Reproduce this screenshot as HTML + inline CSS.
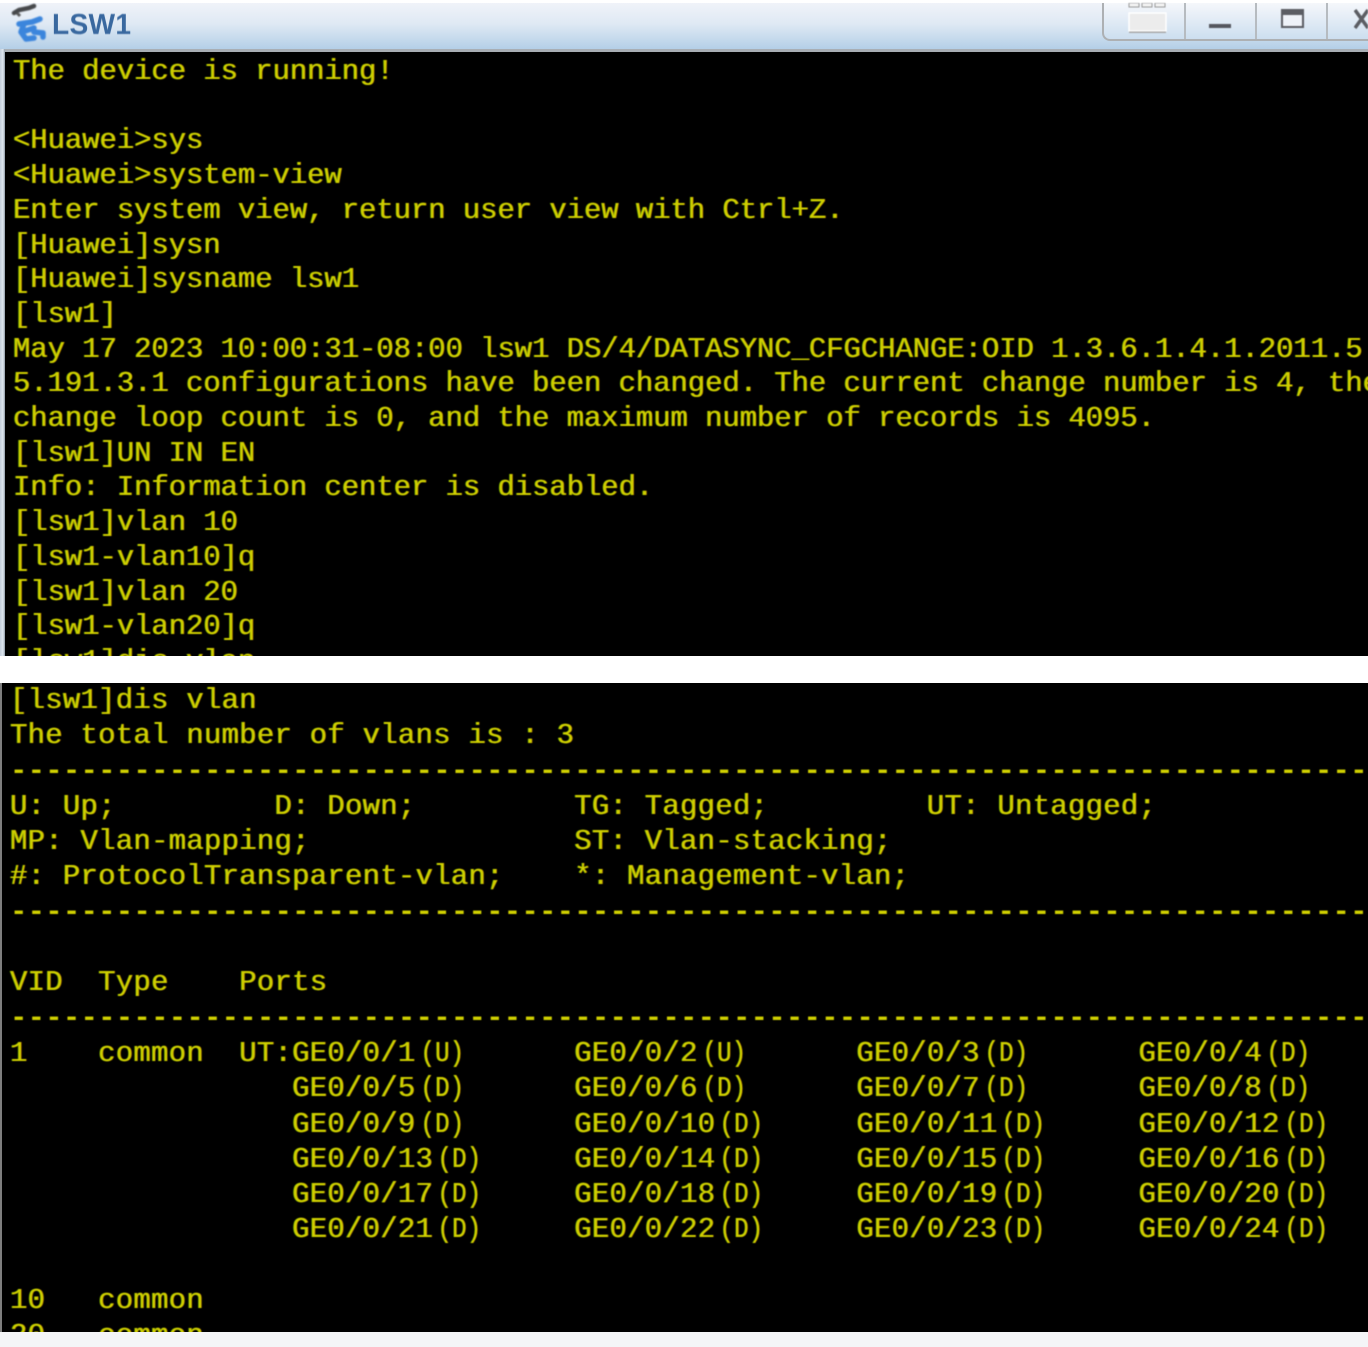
<!DOCTYPE html>
<html><head><meta charset="utf-8">
<style>
html,body{margin:0;padding:0;background:#fff;width:1368px;height:1347px;overflow:hidden}
#root{position:relative;width:1368px;height:1347px;overflow:hidden;background:#fff}
.bar{position:absolute;left:0;top:3px;width:1368px;height:46px;background:linear-gradient(#f0f3f9,#dfe9f4 45%,#b4cfe7)}
.title{position:absolute;left:52px;top:7px;font:bold 29px/36px "Liberation Sans",sans-serif;color:#39689f;letter-spacing:.3px;transform:scaleX(.97);transform-origin:0 0;filter:blur(.4px)}
.term{position:absolute;background:#000;overflow:hidden}
pre{position:absolute;margin:0;font-family:"Liberation Mono","Courier New",monospace;color:#cfcf00;filter:blur(.4px);text-shadow:-.6px 0 0 #4a9000,.6px 0 0 #a06000}
pre b{font-weight:bold;text-shadow:none;color:#d0d000}
pre i{font-style:normal;display:inline-block;transform:scaleX(.83);transform-origin:50% 50%}
#t1{left:0;top:49px;width:1368px;height:607px;background:#000}
#t1 pre{left:13px;top:6px;font-size:29px;letter-spacing:-.1px;line-height:34.7px}
#t2{left:0;top:683px;width:1368px;height:649px}
#t2 pre{left:10px;top:0;font-size:29px;letter-spacing:.23px;line-height:35.3px}
.edge{position:absolute;left:0;width:5px;top:49px;height:607px;background:linear-gradient(90deg,#c3cedb,#dfe7ef 60%,#8c98a4)}
.edge2{position:absolute;left:0;width:2px;top:683px;height:649px;background:#7e7e7e}
.foot{position:absolute;left:0;top:1332px;width:1368px;height:15px;background:#f4f5f7}
.tabs{position:absolute;left:1102px;top:3px;width:266px;height:38px;border:solid #adb0b3;border-width:0 0 2px 2px;border-bottom-left-radius:8px;background:linear-gradient(#f5f7fb,#ccdeef);box-sizing:border-box;filter:blur(.3px)}
.sep{position:absolute;top:3px;width:1.5px;height:36px;background:#b6bbc0}
.topline{position:absolute;left:5px;top:49px;width:1363px;height:3px;background:#a8aeb4;z-index:3}
</style></head>
<body><div id="root">
<div class="bar"></div>
<svg style="position:absolute;left:10px;top:2px;filter:blur(.7px)" width="36" height="40" viewBox="0 0 36 40">
<path d="M4 11 L9 8 L19 6 L24 4" stroke="#45474a" stroke-width="4.5" fill="none" stroke-linecap="round"/>
<path d="M7 11 l3 3" stroke="#555" stroke-width="3" fill="none"/>
<path d="M9 22 L22 20 L30 17 M14 22 L11 30 L16 37 L24 36 M24 30 L33 31 L33 35 M12 30 L24 26" stroke="#3b85dc" stroke-width="5.5" fill="none" stroke-linecap="round" stroke-linejoin="round"/>
</svg>
<div class="title">LSW1</div>
<div class="tabs"></div>
<div class="sep" style="left:1184px"></div>
<div class="sep" style="left:1255px"></div>
<div class="sep" style="left:1326px"></div>
<svg style="position:absolute;left:1128px;top:3px;filter:blur(.4px)" width="44" height="30" viewBox="0 0 44 30">
<rect x="1" y="0" width="10" height="4" fill="#f4f4f4" stroke="#9a9a9a"/><rect x="14" y="0" width="10" height="4" fill="#f4f4f4" stroke="#9a9a9a"/><rect x="27" y="0" width="10" height="4" fill="#f4f4f4" stroke="#9a9a9a"/>
<rect x="1" y="10" width="37" height="18" fill="#ececec" stroke="#fff" stroke-width="1.5"/>
<rect x="1" y="28.5" width="37" height="1.5" fill="#a6a6a6"/>
</svg>
<div style="position:absolute;left:1209px;top:24px;width:22px;height:4px;background:#55575e;filter:blur(.4px)"></div>
<div style="position:absolute;left:1281px;top:9px;width:23px;height:19px;box-sizing:border-box;border:2.5px solid #5b5d63;border-top-width:6px;background:#eef2f8;filter:blur(.4px)"></div>
<svg style="position:absolute;left:1354px;top:9px;filter:blur(.4px)" width="14" height="20" viewBox="0 0 14 20"><path d="M1 1 L14 19 M14 1 L1 19" stroke="#5b5d63" stroke-width="3.5" fill="none"/></svg>

<div class="term" id="t1"><pre>The device is running!

&lt;Huawei&gt;sys
&lt;Huawei&gt;system-view
Enter system view, return user view with Ctrl+Z.
[Huawei]sysn
[Huawei]sysname lsw1
[lsw1]
May 17 2023 10:00:31-08:00 lsw1 DS/4/DATASYNC_CFGCHANGE:OID 1.3.6.1.4.1.2011.5
5.191.3.1 configurations have been changed. The current change number is 4, the
change loop count is 0, and the maximum number of records is 4095.
[lsw1]UN IN EN
Info: Information center is disabled.
[lsw1]vlan 10
[lsw1-vlan10]q
[lsw1]vlan 20
[lsw1-vlan20]q
[lsw1]dis vlan</pre></div>
<div class="edge"></div>
<div class="topline"></div>

<div class="term" id="t2"><pre>[lsw1]dis vlan
The total number of vlans is : 3
<b>--------------------------------------------------------------------------------</b>
U: Up;         D: Down;         TG: Tagged;         UT: Untagged;
MP: Vlan-mapping;               ST: Vlan-stacking;
#: ProtocolTransparent-vlan;    *: Management-vlan;
<b>--------------------------------------------------------------------------------</b>

VID  Type    Ports
<b>--------------------------------------------------------------------------------</b>
1    common  UT:GE0/0/1<i>(U)</i>      GE0/0/2<i>(U)</i>      GE0/0/3<i>(D)</i>      GE0/0/4<i>(D)</i>
                GE0/0/5<i>(D)</i>      GE0/0/6<i>(D)</i>      GE0/0/7<i>(D)</i>      GE0/0/8<i>(D)</i>
                GE0/0/9<i>(D)</i>      GE0/0/10<i>(D)</i>     GE0/0/11<i>(D)</i>     GE0/0/12<i>(D)</i>
                GE0/0/13<i>(D)</i>     GE0/0/14<i>(D)</i>     GE0/0/15<i>(D)</i>     GE0/0/16<i>(D)</i>
                GE0/0/17<i>(D)</i>     GE0/0/18<i>(D)</i>     GE0/0/19<i>(D)</i>     GE0/0/20<i>(D)</i>
                GE0/0/21<i>(D)</i>     GE0/0/22<i>(D)</i>     GE0/0/23<i>(D)</i>     GE0/0/24<i>(D)</i>

10   common
20   common</pre></div>
<div class="edge2"></div>
<div class="foot"></div>
</div></body></html>
